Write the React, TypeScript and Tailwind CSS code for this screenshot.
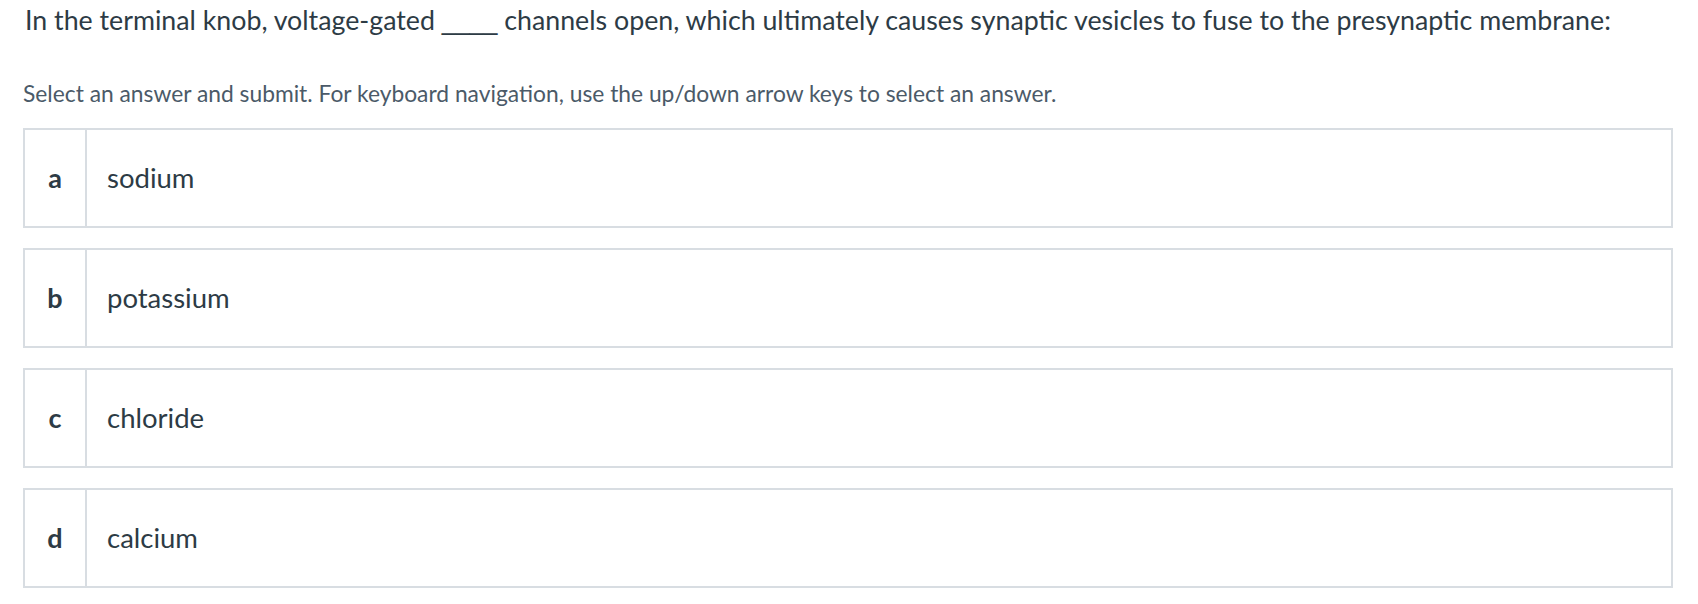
import React from "react";

const answers = [
  { key: "a", text: "sodium" },
  { key: "b", text: "potassium" },
  { key: "c", text: "chloride" },
  { key: "d", text: "calcium" },
];

export default function App() {
  return (
    <div
      className="w-[1698px] h-[604px] bg-white pl-[23px] pr-[25px] text-[#2d3b45]"
      style={{ fontFamily: "Lato, 'Noto Sans', sans-serif" }}
    >
      <h1 className="pl-[2px] pt-[4px] text-[26.75px] leading-[32px] font-normal">
        In the terminal knob, voltage-gated{" "}
        <span
          className="text-[25px] leading-[0px]"
          style={{ fontFamily: "'Liberation Sans', Arial, sans-serif" }}
        >
          ____
        </span>{" "}
        channels open, which ultimately causes synaptic vesicles to fuse to the presynaptic membrane:
      </h1>
      <p className="mt-[43px] text-[22.8px] leading-[28px] text-[#4b5a68]">
        Select an answer and submit. For keyboard navigation, use the up/down arrow keys to select an answer.
      </p>
      <div className="mt-[21px] flex flex-col gap-[20px]" role="radiogroup">
        {answers.map((a) => (
          <div
            key={a.key}
            role="radio"
            aria-checked="false"
            className="flex h-[100px] border-2 border-[#d8dde2] bg-white"
          >
            <div className="flex w-[62px] items-center justify-center border-r-2 border-[#d8dde2] text-[27px] font-bold">
              {a.key}
            </div>
            <div className="flex items-center pl-[20px] text-[27.5px]">{a.text}</div>
          </div>
        ))}
      </div>
    </div>
  );
}
